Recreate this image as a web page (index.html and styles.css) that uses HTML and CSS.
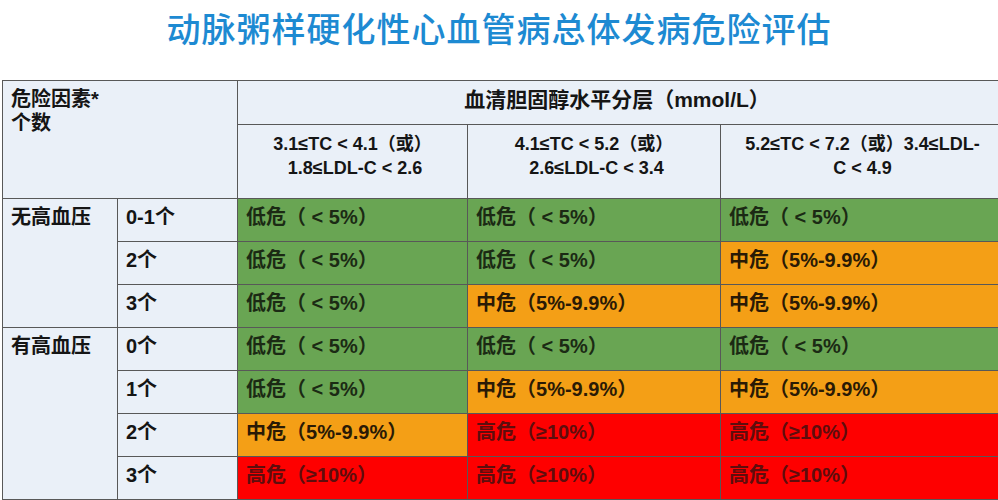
FILE: index.html
```html
<!DOCTYPE html>
<html lang="zh-CN">
<head>
<meta charset="utf-8">
<title>动脉粥样硬化性心血管病总体发病危险评估</title>
<link rel="stylesheet" href="styles.css">
</head>
<body>
<div class="page">
  <h1 class="title">动脉粥样硬化性心血管病总体发病危险评估</h1>
  <table class="risk">
    <colgroup>
      <col class="c1"><col class="c2"><col class="c3"><col class="c4"><col class="c5">
    </colgroup>
    <thead>
      <tr class="h1">
        <th class="hd corner" colspan="2" rowspan="2">危险因素*<br>个数</th>
        <th class="hd center top" colspan="3">血清胆固醇水平分层（mmol/L）</th>
      </tr>
      <tr class="h2">
        <th class="hd center sub">3.1≤TC &lt; 4.1（或）<br>&nbsp;1.8≤LDL-C &lt; 2.6</th>
        <th class="hd center sub">4.1≤TC &lt; 5.2（或）<br>&nbsp;2.6≤LDL-C &lt; 3.4</th>
        <th class="hd center sub">5.2≤TC &lt; 7.2（或）3.4≤LDL-<br>C &lt; 4.9</th>
      </tr>
    </thead>
    <tbody>
      <tr>
        <td class="hd" rowspan="3">无高血压</td>
        <td class="hd">0-1个</td>
        <td class="low">低危（ &lt; 5%）</td>
        <td class="low">低危（ &lt; 5%）</td>
        <td class="low">低危（ &lt; 5%）</td>
      </tr>
      <tr>
        <td class="hd">2个</td>
        <td class="low">低危（ &lt; 5%）</td>
        <td class="low">低危（ &lt; 5%）</td>
        <td class="mid">中危（5%-9.9%）</td>
      </tr>
      <tr>
        <td class="hd">3个</td>
        <td class="low">低危（ &lt; 5%）</td>
        <td class="mid">中危（5%-9.9%）</td>
        <td class="mid">中危（5%-9.9%）</td>
      </tr>
      <tr>
        <td class="hd" rowspan="4">有高血压</td>
        <td class="hd">0个</td>
        <td class="low">低危（ &lt; 5%）</td>
        <td class="low">低危（ &lt; 5%）</td>
        <td class="low">低危（ &lt; 5%）</td>
      </tr>
      <tr>
        <td class="hd">1个</td>
        <td class="low">低危（ &lt; 5%）</td>
        <td class="mid">中危（5%-9.9%）</td>
        <td class="mid">中危（5%-9.9%）</td>
      </tr>
      <tr>
        <td class="hd">2个</td>
        <td class="mid">中危（5%-9.9%）</td>
        <td class="high">高危（≥10%）</td>
        <td class="high">高危（≥10%）</td>
      </tr>
      <tr>
        <td class="hd">3个</td>
        <td class="high">高危（≥10%）</td>
        <td class="high">高危（≥10%）</td>
        <td class="high">高危（≥10%）</td>
      </tr>
    </tbody>
  </table>
</div>
</body>
</html>
```

FILE: styles.css
```css
html, body {
  margin: 0;
  padding: 0;
  overflow: hidden;
  background: #ffffff;
}
.page {
  width: 998px;
  height: 500px;
  overflow: hidden;
}
.title {
  margin: 0;
  height: 80px;
  box-sizing: border-box;
  padding-top: 6px;
  text-align: center;
  font-family: "Noto Sans CJK SC", "Noto Sans", sans-serif;
  font-weight: 500;
  font-size: 34px;
  line-height: 44px;
  letter-spacing: 1px;
  color: #1d8ad2;
}
.risk {
  margin-left: 2px;
  border-collapse: collapse;
  table-layout: fixed;
  width: 1002px;
  font-family: "Liberation Sans", "Noto Sans CJK SC", sans-serif;
  font-weight: 700;
  font-size: 20px;
  color: #151515;
}
.c1 { width: 115px; }
.c2 { width: 120px; }
.c3 { width: 230px; }
.c4 { width: 253px; }
.c5 { width: 284px; }
.risk th, .risk td {
  border: 1px solid #585858;
  padding: 6px 0 0 8px;
  vertical-align: top;
  text-align: left;
  line-height: 24px;
  white-space: nowrap;
  box-sizing: border-box;
}
.risk tbody tr { height: 43px; }
.h1 { height: 44px; }
.h2 { height: 74px; }
.hd { background: #eaf0f8; }
.corner {
  line-height: 20px;
  padding-top: 6px;
  padding-left: 10px;
}
.center {
  text-align: center !important;
  padding-left: 0 !important;
}
.top {
  font-size: 21px;
  padding-top: 7px !important;
  padding-right: 8px !important;
}
.sub {
  font-size: 18px;
  font-weight: 700;
  line-height: 23px;
  padding: 7px 2px 0 2px !important;
}
.low { background: #69a553; color: #1b2a14; }
.mid { background: #f49f16; color: #2a1a05; }
.high { background: #fe0000; color: #5e0d0d; }
.risk tbody .hd { padding-left: 8px; }
```
